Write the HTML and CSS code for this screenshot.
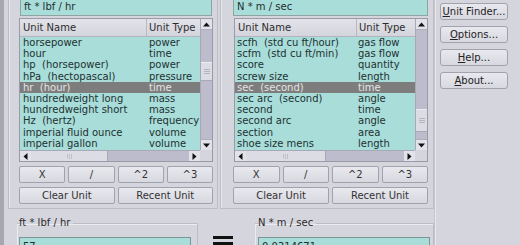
FILE: index.html
```html
<!DOCTYPE html>
<html>
<head>
<meta charset="utf-8">
<link rel="stylesheet" href="styles.css">
</head>
<body>
<div class="app">
  <div class="main">
    <div class="panels">
      <section class="panel panel-a">
        <div class="unitbox">ft * lbf / hr</div>
        <div class="list list-a">
          <div class="table">
            <div class="th">Unit Name</div><div class="th th-type">Unit Type</div>
            <div class="td">horsepower</div><div class="td">power</div>
            <div class="td">hour</div><div class="td">time</div>
            <div class="td">hp&nbsp; (horsepower)</div><div class="td">power</div>
            <div class="td">hPa&nbsp; (hectopascal)</div><div class="td">pressure</div>
            <div class="td sel">hr&nbsp; (hour)</div><div class="td sel">time</div>
            <div class="td">hundredweight long</div><div class="td">mass</div>
            <div class="td">hundredweight short</div><div class="td">mass</div>
            <div class="td">Hz&nbsp; (hertz)</div><div class="td">frequency</div>
            <div class="td">imperial fluid ounce</div><div class="td">volume</div>
            <div class="td">imperial gallon</div><div class="td">volume</div>
          </div>
          <div class="vscroll vscroll-a">
            <div class="arrow"><svg width="7" height="5" viewBox="0 0 7 5"><path d="M0 4.5 L3.5 0.5 L7 4.5Z" fill="#111"/></svg></div>
            <div class="vtrack"><div class="vthumb"><i></i><i></i><i></i></div></div>
            <div class="arrow"><svg width="7" height="5" viewBox="0 0 7 5"><path d="M0 0.5 L3.5 4.5 L7 0.5Z" fill="#111"/></svg></div>
          </div>
          <div class="hscroll hscroll-a">
            <div class="harrow"><svg width="5" height="7" viewBox="0 0 5 7"><path d="M4.5 0 L0.5 3.5 L4.5 7Z" fill="#111"/></svg></div>
            <div class="htrack"><div class="hthumb"><i></i><i></i><i></i></div></div>
            <div class="harrow"><svg width="5" height="7" viewBox="0 0 5 7"><path d="M0.5 0 L4.5 3.5 L0.5 7Z" fill="#111"/></svg></div>
          </div>
          <div class="corner"></div>
        </div>
        <div class="ops">
          <button class="btn">X</button><button class="btn">/</button><button class="btn">^2</button><button class="btn">^3</button>
        </div>
        <div class="ops ops-2">
          <button class="btn">Clear Unit</button><button class="btn">Recent Unit</button>
        </div>
      </section>
      <section class="panel panel-b">
        <div class="unitbox">N * m / sec</div>
        <div class="list list-b">
          <div class="table">
            <div class="th">Unit Name</div><div class="th th-type">Unit Type</div>
            <div class="td">scfh&nbsp; (std cu ft/hour)</div><div class="td">gas flow</div>
            <div class="td">scfm&nbsp; (std cu ft/min)</div><div class="td">gas flow</div>
            <div class="td">score</div><div class="td">quantity</div>
            <div class="td">screw size</div><div class="td">length</div>
            <div class="td sel">sec&nbsp; (second)</div><div class="td sel">time</div>
            <div class="td">sec arc&nbsp; (second)</div><div class="td">angle</div>
            <div class="td">second</div><div class="td">time</div>
            <div class="td">second arc</div><div class="td">angle</div>
            <div class="td">section</div><div class="td">area</div>
            <div class="td">shoe size mens</div><div class="td">length</div>
          </div>
          <div class="vscroll vscroll-b">
            <div class="arrow"><svg width="7" height="5" viewBox="0 0 7 5"><path d="M0 4.5 L3.5 0.5 L7 4.5Z" fill="#111"/></svg></div>
            <div class="vtrack"><div class="vthumb"><i></i><i></i><i></i></div></div>
            <div class="arrow"><svg width="7" height="5" viewBox="0 0 7 5"><path d="M0 0.5 L3.5 4.5 L7 0.5Z" fill="#111"/></svg></div>
          </div>
          <div class="hscroll hscroll-b">
            <div class="harrow"><svg width="5" height="7" viewBox="0 0 5 7"><path d="M4.5 0 L0.5 3.5 L4.5 7Z" fill="#111"/></svg></div>
            <div class="htrack"><div class="hthumb"><i></i><i></i><i></i></div></div>
            <div class="harrow"><svg width="5" height="7" viewBox="0 0 5 7"><path d="M0.5 0 L4.5 3.5 L0.5 7Z" fill="#111"/></svg></div>
          </div>
          <div class="corner"></div>
        </div>
        <div class="ops">
          <button class="btn">X</button><button class="btn">/</button><button class="btn">^2</button><button class="btn">^3</button>
        </div>
        <div class="ops ops-2">
          <button class="btn">Clear Unit</button><button class="btn">Recent Unit</button>
        </div>
      </section>
    </div>
    <div class="bottom">
      <fieldset class="group group-a">
        <legend>ft * lbf / hr</legend>
        <div class="valbox">57</div>
      </fieldset>
      <div class="equals"><i></i><i></i></div>
      <fieldset class="group group-b">
        <legend>N * m / sec</legend>
        <div class="valbox">0.0314671</div>
      </fieldset>
    </div>
  </div>
  <aside class="side">
    <button class="sbtn"><u>U</u>nit Finder...</button>
    <button class="sbtn"><u>O</u>ptions...</button>
    <button class="sbtn"><u>H</u>elp...</button>
    <button class="sbtn"><u>A</u>bout...</button>
  </aside>
</div>
</body>
</html>
```
FILE: styles.css
```css
* { box-sizing: border-box; }
html, body {
  margin: 0;
  padding: 0;
  width: 520px;
  height: 245px;
  overflow: hidden;
  background: #d5d5dd;
  font-family: "DejaVu Sans", sans-serif;
  font-size: 10px;
  color: #2a2a2a;
}
.app {
  display: flex;
  height: 245px;
  border-left: 4px solid #a7a7b0;
}
.main {
  width: 431px;
  padding-left: 4px;
  display: flex;
  flex-direction: column;
}
.panels {
  display: flex;
  gap: 2px;
  margin-top: -8px;
}
.panel {
  border: 1px solid #bdbdc6;
  box-shadow: inset 1px 1px 0 #e6e6ec;
  display: flex;
  flex-direction: column;
  padding-bottom: 4px;
}
.panel-a { width: 210px; padding-left: 10px; padding-right: 4px; }
.panel-b { width: 214px; padding-left: 12px; padding-right: 5px; }
.unitbox {
  height: 23px;
  background: #a9ddd9;
  border: 1px solid #8fa3a3;
  border-top: none;
  display: flex;
  align-items: flex-end;
  padding: 0 3px 2px;
  line-height: 12px;
  color: #1e2e2e;
}
.panel-a .unitbox { margin: 0 1px 0 1px; }
.list {
  margin-top: 2px;
  border: 1px solid #9a9aa6;
  display: grid;
  grid-template-columns: 1fr 12px;
  grid-template-rows: 131px 11px;
  height: 144px;
}
.panel-b .list { margin-left: 1px; }
.table {
  display: grid;
  grid-template-rows: 18px repeat(10, 11.2px);
  align-content: start;
  background: #a9ddd9;
  overflow: hidden;
}
.list-a .table { grid-template-columns: 126px 1fr; }
.list-b .table { grid-template-columns: 121px 1fr; }
.th {
  background: linear-gradient(#e2e2ea, #d4d4dc);
  border-bottom: 1px solid #b4b4be;
  line-height: 17px;
  padding-left: 3px;
  color: #2c2c2c;
}
.th-type { border-left: 1px solid #b8b8c2; padding-left: 2px; }
.td {
  line-height: 11.2px;
  padding-left: 3px;
  white-space: nowrap;
  overflow: hidden;
  color: #1d3131;
}
.list-b .td { padding-left: 2px; }
.td.sel { background: #7d7d7d; color: #e4e4e4; }
.vscroll {
  display: flex;
  flex-direction: column;
  background: #bcbccc;
  border-left: 1px solid #a8a8b6;
}
.arrow {
  height: 11px;
  background: #e2e2ea;
  display: flex;
  align-items: center;
  justify-content: center;
  border-bottom: 1px solid #b0b0bc;
}
.vscroll .arrow:last-child { border-bottom: none; border-top: 1px solid #b0b0bc; }
.vtrack { flex: 1; display: flex; flex-direction: column; }
.vthumb {
  background: #dcdce4;
  border-top: 1px solid #ececf2;
  border-bottom: 1px solid #a8a8b6;
  display: flex;
  flex-direction: column;
  align-items: center;
  justify-content: center;
  gap: 1px;
}
.vthumb i { display: block; width: 6px; height: 1px; background: #b4b4c0; }
.vscroll-a .vthumb { margin-top: 32px; height: 19px; }
.vscroll-b .vthumb { margin-top: 79px; height: 23px; }
.hscroll {
  display: flex;
  background: #bcbccc;
  border-top: 1px solid #a8a8b6;
}
.harrow {
  width: 11px;
  background: #e2e2ea;
  display: flex;
  align-items: center;
  justify-content: center;
}
.htrack { flex: 1; display: flex; }
.hthumb {
  background: #dcdce4;
  border-right: 1px solid #a8a8b6;
  display: flex;
  align-items: center;
  justify-content: center;
  gap: 1px;
}
.hthumb i { display: block; width: 1px; height: 5px; background: #c0c0cc; }
.hscroll-a .hthumb { width: 77px; }
.hscroll-b .hthumb { width: 80px; }
.corner { background: #d5d5dd; }
.ops {
  display: grid;
  grid-template-columns: repeat(4, 1fr);
  gap: 3px;
  margin-top: 4px;
}
.ops-2 { grid-template-columns: 1fr 1fr; }
.btn, .sbtn {
  font-family: "DejaVu Sans", sans-serif;
  font-size: 10px;
  height: 17px;
  padding: 0;
  border: 1px solid #a2a2ac;
  border-radius: 2px;
  background: linear-gradient(#e8e8ee, #d8d8e0);
  color: #333;
  line-height: 15px;
}
.bottom {
  display: flex;
  align-items: flex-start;
  padding-top: 8px;
}
.group {
  margin: 0;
  padding: 8px 6px 0 2px;
  border: none;
  border-top: 1px solid #bcbcc6;
  border-right: 1px solid #bcbcc6;
  box-shadow: 1px 1px 0 #ececf0 inset;
  min-width: 0;
}
.group legend {
  padding: 0 3px 0 0;
  line-height: 12px;
  color: #2a2a2a;
}
.group-a { margin-left: 9px; width: 181px; }
.group-b { margin-left: 22px; width: 179px; padding: 8px 3px 0 3px; }
.valbox {
  height: 20px;
  background: #a9ddd9;
  border: 1px solid #7f9595;
  padding: 3px 3px 0;
  line-height: 12px;
  color: #1e2e2e;
}
.equals {
  margin-left: 15px;
  margin-top: 19px;
  width: 20px;
  display: flex;
  flex-direction: column;
  gap: 3px;
}
.equals i { display: block; height: 3px; background: #111; }
.side {
  flex: 1;
  border-left: 1px solid #e8e8ee;
  box-shadow: -1px 0 0 #c4c4cc;
  display: flex;
  flex-direction: column;
  align-items: flex-start;
  gap: 6px;
  padding: 3px 0 0 4px;
}
.sbtn {
  width: 68px;
  color: #222;
  border-radius: 3px;
}
.sbtn u { text-decoration-thickness: 1px; }
```
